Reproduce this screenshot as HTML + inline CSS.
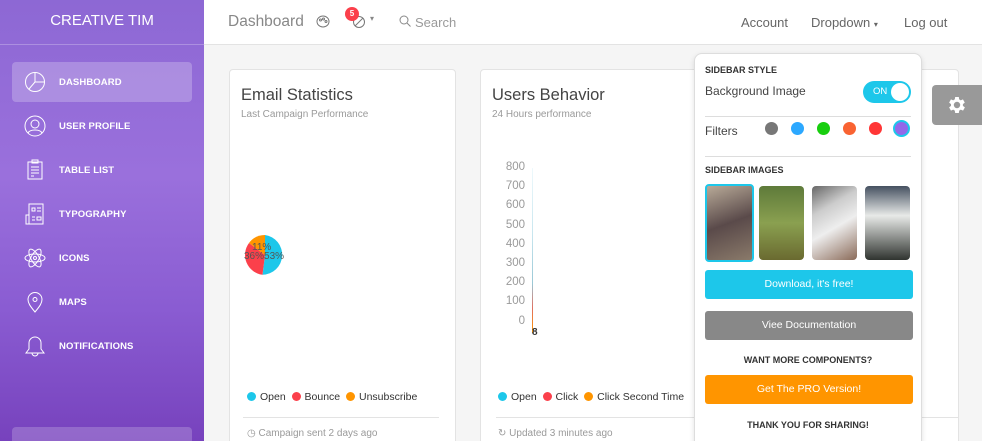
<!DOCTYPE html>
<html><head><meta charset="utf-8"><style>
*{box-sizing:border-box;margin:0;padding:0}
html,body{width:982px;height:441px;overflow:hidden}
body{background:#f5f5f5;font-family:"Liberation Sans",Helvetica,sans-serif;position:relative}
.sb{position:absolute;left:0;top:0;width:204px;height:441px;background:linear-gradient(180deg,#8d68d4 0%,#9a70dc 40%,#8a5cd2 70%,#7742bd 100%);color:#fff;overflow:hidden}
.logo{height:45px;line-height:42px;text-align:center;font-size:15px;border-bottom:1px solid rgba(255,255,255,.25)}
.nav{position:absolute;left:12px;width:180px;height:40px;display:flex;align-items:center;font-size:9.5px;font-weight:bold;letter-spacing:.1px}
.nav svg{position:absolute;left:12px}
.nav span{position:absolute;left:47px}
.act{background:rgba(255,255,255,.23);border-radius:4px}
.top{position:absolute;left:204px;top:0;right:0;height:45px;background:#fff;border-bottom:1px solid #e3e3e3;font-size:13px;color:#9a9a9a}
.card{position:absolute;background:#fff;border:1px solid #e3e3e3;border-radius:4px}
h4{font-weight:normal;font-size:16.5px;color:#444;position:absolute}
.sub{font-size:10px;color:#9a9a9a;position:absolute}
.leg{position:absolute;font-size:10.5px;color:#333;white-space:nowrap}
.dot{display:inline-block;width:9px;height:9px;border-radius:50%;vertical-align:-1px;margin-right:4px}
.panel{position:absolute;left:694px;top:53px;width:228px;height:400px;background:#fff;border:1px solid #ddd;border-radius:8px;box-shadow:0 2px 6px rgba(0,0,0,.12)}
.ph{position:absolute;font-size:9px;font-weight:bold;color:#333;left:10px}
.btn{position:absolute;left:10px;width:208px;height:29px;border-radius:3px;color:#fff;font-size:10.5px;text-align:center;line-height:29px}
.fd{position:absolute;top:68px;width:13px;height:13px;border-radius:50%}
.img{position:absolute;top:132px;width:45px;height:74px;border-radius:4px}
</style></head><body>
<div class="sb">
<div class="logo">CREATIVE TIM</div>
<div class="nav act" style="top:62px"><svg width="22" height="22" viewBox="0 0 22 22" fill="none" stroke="#fff" stroke-width="1"><circle cx="11" cy="11" r="9.5"/><path d="M11 1.5V11h9.5M11 11l-6 7"/></svg><span>DASHBOARD</span></div>
<div class="nav" style="top:106px"><svg width="22" height="22" viewBox="0 0 22 22" fill="none" stroke="#fff" stroke-width="1"><circle cx="11" cy="11" r="10"/><circle cx="11" cy="9" r="4"/><path d="M4 18c2-4 12-4 14 0"/></svg><span>USER PROFILE</span></div>
<div class="nav" style="top:150px"><svg width="22" height="22" viewBox="0 0 22 22" fill="none" stroke="#fff" stroke-width="1"><rect x="4" y="3" width="14" height="17"/><rect x="8" y="1" width="6" height="3"/><path d="M7 8h8M7 11h8M7 14h8M7 17h3"/></svg><span>TABLE LIST</span></div>
<div class="nav" style="top:194px"><svg width="22" height="22" viewBox="0 0 22 22" fill="none" stroke="#fff" stroke-width="1"><path d="M5 1h14v20H2v-9h3zM5 12v9"/><path d="M8 5h3v3H8zM13 5h4M13 8h4M8 14h3M8 17h3M13 14h4v3h-4z"/></svg><span>TYPOGRAPHY</span></div>
<div class="nav" style="top:238px"><svg width="22" height="22" viewBox="0 0 22 22" fill="none" stroke="#fff" stroke-width="1"><ellipse cx="11" cy="11" rx="10" ry="4"/><ellipse cx="11" cy="11" rx="10" ry="4" transform="rotate(60 11 11)"/><ellipse cx="11" cy="11" rx="10" ry="4" transform="rotate(120 11 11)"/><circle cx="11" cy="11" r="1.5"/></svg><span>ICONS</span></div>
<div class="nav" style="top:282px"><svg width="22" height="22" viewBox="0 0 22 22" fill="none" stroke="#fff" stroke-width="1"><path d="M11 21C6 15 4 12 4 8.5a7 7 0 0 1 14 0C18 12 16 15 11 21z"/><circle cx="11" cy="8.5" r="2"/></svg><span>MAPS</span></div>
<div class="nav" style="top:326px"><svg width="22" height="22" viewBox="0 0 22 22" fill="none" stroke="#fff" stroke-width="1"><path d="M11 2a6 6 0 0 1 6 6v6l3 4H2l3-4V8a6 6 0 0 1 6-6zM8 18a3 3 0 0 0 6 0"/></svg><span>NOTIFICATIONS</span></div>
<div style="position:absolute;left:12px;top:427px;width:180px;height:20px;background:rgba(255,255,255,.2);border-radius:4px"></div>
</div>
<div class="top">
<span style="position:absolute;left:24px;top:13px;font-size:15.5px;color:#888">Dashboard</span>
<svg style="position:absolute;left:112px;top:15px" width="14" height="13" viewBox="0 0 14 13" fill="none" stroke="#777"><ellipse cx="7" cy="6.5" rx="6" ry="5.5"/><circle cx="4.5" cy="5" r="1"/><circle cx="7.5" cy="4" r="1"/><circle cx="10" cy="6.5" r="1"/></svg>
<svg style="position:absolute;left:148px;top:15px" width="14" height="14" viewBox="0 0 14 14" fill="none" stroke="#777"><circle cx="7" cy="7" r="5.5"/><path d="M3 11l8-8"/></svg>
<div style="position:absolute;left:141px;top:7px;width:14px;height:14px;border-radius:50%;background:#fb404b;color:#fff;font-size:8px;font-weight:bold;text-align:center;line-height:14px">5</div>
<span style="position:absolute;left:166px;top:14px;font-size:8px;color:#888">▾</span>
<svg style="position:absolute;left:195px;top:15px" width="12" height="12" viewBox="0 0 12 12" fill="none" stroke="#888"><circle cx="5" cy="5" r="4"/><path d="M8 8l3.5 3.5"/></svg>
<span style="position:absolute;left:211px;top:15px">Search</span>
<span style="position:absolute;left:537px;top:15px;color:#666">Account</span>
<span style="position:absolute;left:607px;top:15px;color:#666">Dropdown <span style="font-size:8px">▾</span></span>
<span style="position:absolute;left:700px;top:15px;color:#666">Log out</span>
</div>
<div class="card" style="left:229px;top:69px;width:227px;height:390px">
<h4 style="left:11px;top:16px">Email Statistics</h4>
<div class="sub" style="left:11px;top:39px">Last Campaign Performance</div>
<svg style="position:absolute;left:14px;top:164px" width="42" height="42" viewBox="-21 -21 42 42"><path d="M0 0L0-20A20 20 0 0 1 -2.5 19.8Z" fill="#1dc7ea"/><path d="M0 0L-2.5 19.8A20 20 0 0 1 -16 -12Z" fill="#fb404b"/><path d="M0 0L-16 -12A20 20 0 0 1 0 -20Z" fill="#ff9500"/><text x="-21" y="4" font-size="10" fill="#555" font-family="Liberation Sans">36%53%</text><text x="-13" y="-5" font-size="10" fill="#555" font-family="Liberation Sans">11%</text></svg>
<div class="leg" style="left:17px;top:321px"><span class="dot" style="background:#1dc7ea"></span>Open &nbsp;<span class="dot" style="background:#fb404b"></span>Bounce &nbsp;<span class="dot" style="background:#ff9500"></span>Unsubscribe</div>
<div style="position:absolute;left:13px;right:16px;top:347px;border-top:1px solid #e3e3e3"></div>
<div class="sub" style="left:17px;top:358px">◷ Campaign sent 2 days ago</div>
</div>
<div class="card" style="left:480px;top:69px;width:479px;height:390px">
<h4 style="left:11px;top:16px">Users Behavior</h4>
<div class="sub" style="left:11px;top:39px">24 Hours performance</div>
<div style="position:absolute;left:20px;top:88px;width:24px;text-align:right;font-size:11.5px;color:#9a9a9a;line-height:19.2px">800<br>700<br>600<br>500<br>400<br>300<br>200<br>100<br>0</div>
<div style="position:absolute;left:51px;top:98px;width:1px;height:165px;background:linear-gradient(#eef9fc,#c8e6ef 40%,#9ac8d6 70%,#e07060 85%,#ff9500)"></div>
<div style="position:absolute;left:51px;top:257px;font-size:10px;font-weight:bold;color:#333">8</div>
<div class="leg" style="left:17px;top:321px"><span class="dot" style="background:#1dc7ea"></span>Open &nbsp;<span class="dot" style="background:#fb404b"></span>Click &nbsp;<span class="dot" style="background:#ff9500"></span>Click Second Time</div>
<div style="position:absolute;left:15px;right:0;top:347px;border-top:1px solid #e3e3e3"></div>
<div class="sub" style="left:17px;top:358px">↻ Updated 3 minutes ago</div>
</div>
<div style="position:absolute;left:932px;top:85px;width:50px;height:40px;background:#999;border-radius:4px 0 0 4px"><svg style="position:absolute;left:14px;top:9px" width="22" height="22" viewBox="0 0 24 24"><path fill="#fff" d="M19.4 13a7.5 7.5 0 0 0 0-2l2.1-1.6-2-3.5-2.5 1a7 7 0 0 0-1.7-1L15 3.3h-4l-.4 2.6a7 7 0 0 0-1.7 1l-2.5-1-2 3.5L6.5 11a7.5 7.5 0 0 0 0 2l-2.1 1.6 2 3.5 2.5-1a7 7 0 0 0 1.7 1l.4 2.6h4l.4-2.6a7 7 0 0 0 1.7-1l2.5 1 2-3.5zM13 15.5a3.5 3.5 0 1 1 0-7 3.5 3.5 0 0 1 0 7z" transform="translate(-1 0)"/></svg></div>
<div class="panel">
<div class="ph" style="top:11px">SIDEBAR STYLE</div>
<div style="position:absolute;left:10px;top:30px;font-size:12px;color:#444">Background Image</div>
<div style="position:absolute;left:168px;top:27px;width:48px;height:22px;border-radius:11px;background:#1dc7ea;color:#fff;font-size:9.5px;line-height:22px;padding-left:10px">ON<div style="position:absolute;right:2px;top:2px;width:18px;height:18px;border-radius:50%;background:#fff"></div></div>
<div style="position:absolute;left:10px;right:10px;top:62px;border-top:1px solid #ddd"></div>
<div style="position:absolute;left:10px;top:70px;font-size:12px;color:#444">Filters</div>
<div class="fd" style="left:70px;background:#777"></div>
<div class="fd" style="left:96px;background:#2ca8ff"></div>
<div class="fd" style="left:122px;background:#18ce0f"></div>
<div class="fd" style="left:148px;background:#f96332"></div>
<div class="fd" style="left:174px;background:#ff3636"></div>
<div class="fd" style="left:198px;top:66px;width:17px;height:17px;background:#9368e9;border:2px solid #1dc7ea"></div>
<div style="position:absolute;left:10px;right:10px;top:102px;border-top:1px solid #ddd"></div>
<div class="ph" style="top:111px">SIDEBAR IMAGES</div>
<div class="img" style="left:10px;width:49px;top:130px;height:78px;border:2px solid #1dc7ea;background:linear-gradient(160deg,#b8aa98,#5a4a4a 50%,#8a7a6a)"></div>
<div class="img" style="left:64px;background:linear-gradient(180deg,#5e7a3a,#8aa050 50%,#6a6a30)"></div>
<div class="img" style="left:117px;background:linear-gradient(150deg,#666,#ccc 30%,#eee 55%,#8a6a58)"></div>
<div class="img" style="left:170px;background:linear-gradient(180deg,#455060,#e8eae8 40%,#303430)"></div>
<div class="btn" style="top:216px;background:#1dc7ea">Download, it's free!</div>
<div class="btn" style="top:257px;background:#888">Viee Documentation</div>
<div class="ph" style="top:301px;left:0;width:100%;text-align:center">WANT MORE COMPONENTS?</div>
<div class="btn" style="top:321px;background:#ff9500">Get The PRO Version!</div>
<div class="ph" style="top:366px;left:0;width:100%;text-align:center">THANK YOU FOR SHARING!</div>
</div>
</body></html>
